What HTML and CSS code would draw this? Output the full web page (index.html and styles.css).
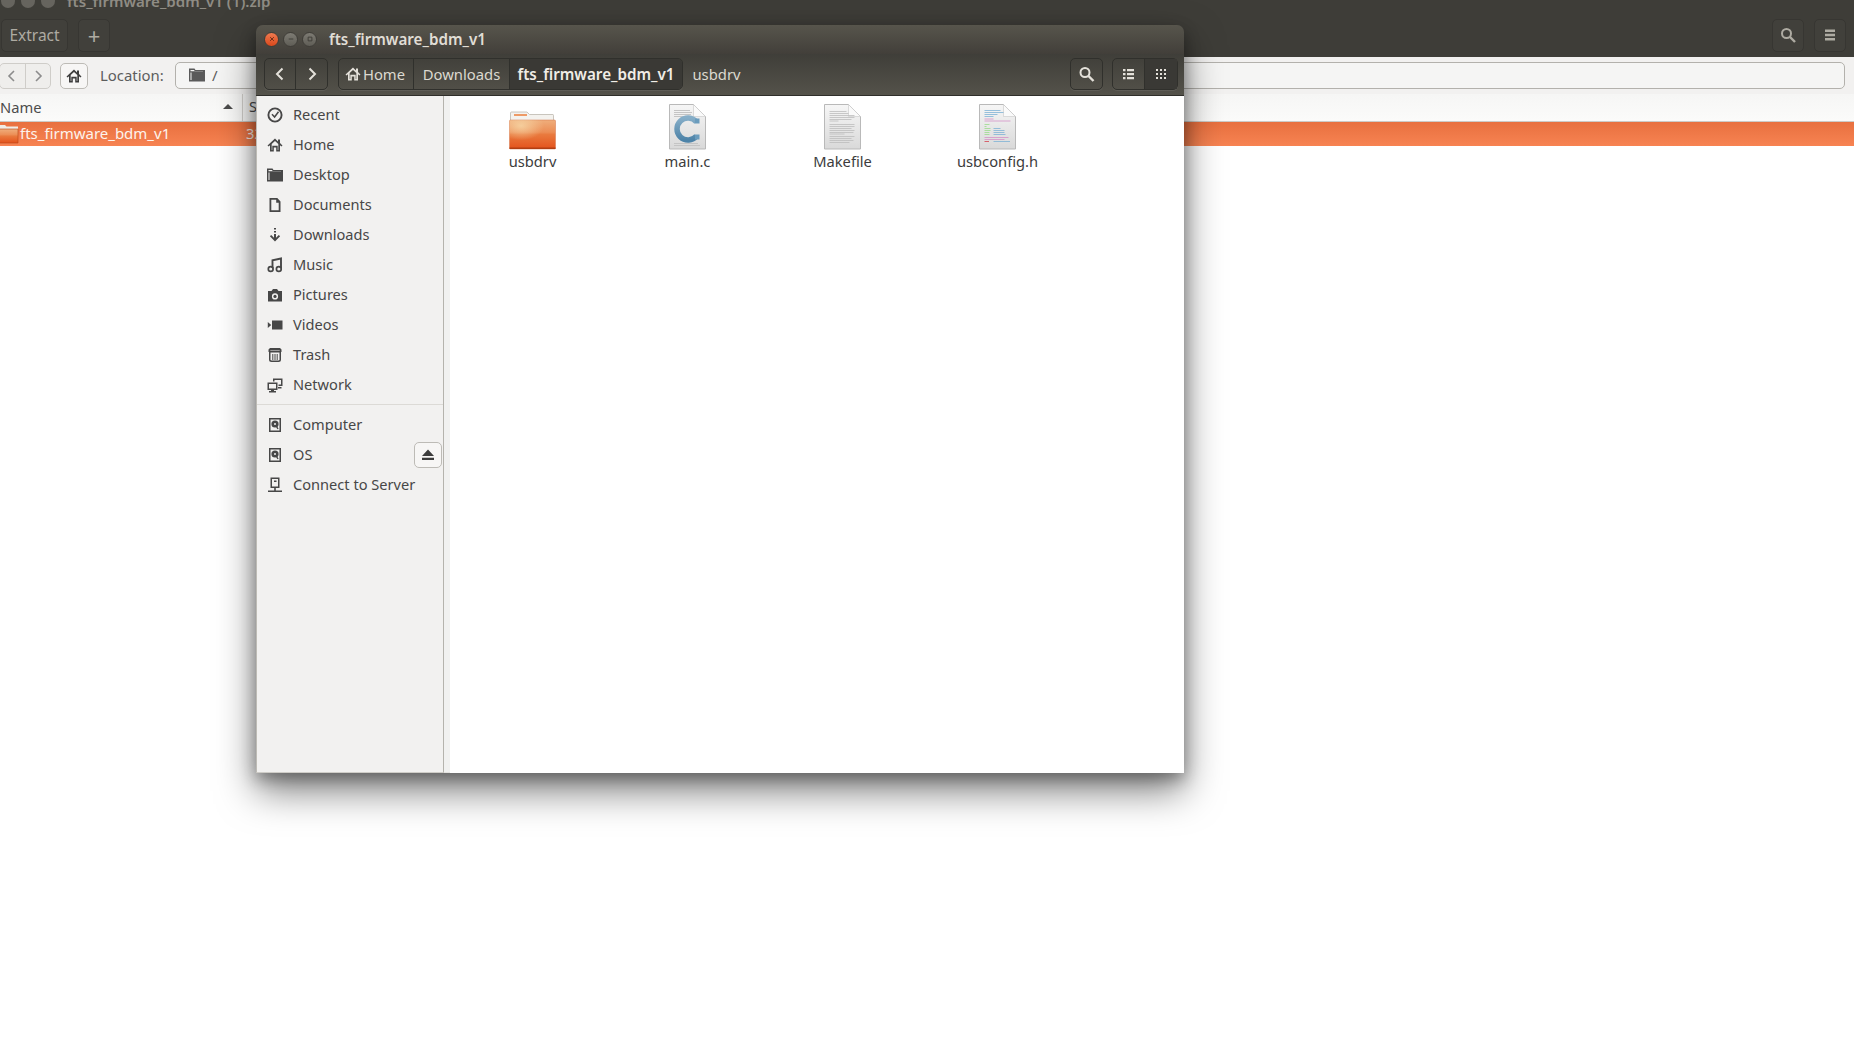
FILE: index.html
```html
<!DOCTYPE html>
<html lang="en">
<head>
<meta charset="utf-8">
<title>fts_firmware_bdm_v1</title>
<link rel="stylesheet" href="styles.css">
</head>
<body>
<svg class="defs" width="0" height="0" aria-hidden="true">
  <defs>
    <linearGradient id="page" x1="0" y1="0" x2="0" y2="1"><stop offset="0" stop-color="#f6f6f6"/><stop offset="1" stop-color="#d9d9d9"/></linearGradient>
    <linearGradient id="ring" x1="0" y1="0" x2="0" y2="1"><stop offset="0" stop-color="#86aec8"/><stop offset="1" stop-color="#4d83a8"/></linearGradient>
    <linearGradient id="fold" x1="0" y1="0" x2="0" y2="1"><stop offset="0" stop-color="#efae7c"/><stop offset=".42" stop-color="#ec8d55"/><stop offset=".5" stop-color="#e97a3e"/><stop offset="1" stop-color="#e4521c"/></linearGradient>
    <radialGradient id="glow" cx=".25" cy=".2" r=".5"><stop offset="0" stop-color="#f7d9a8" stop-opacity=".8"/><stop offset="1" stop-color="#f7d9a8" stop-opacity="0"/></radialGradient>
    <symbol id="i-home" viewBox="0 0 16 16"><path d="M8 1.500 .5 8.400l1.100 1.100L3 8.200V14.500h3.800V10.500h2.400v4H13V8.200l1.400 1.300 1.100-1.100-2.500-2.300V2.500h-2v1.900Z M4.700 7 8 3.900 11.300 7v5.900h-.6V8.800H5.300v4.100h-.6Z" fill-rule="evenodd"/></symbol>
    <symbol id="i-folder" viewBox="0 0 16 16"><path d="M0 1.500h5.500l1 1.500H16v11.500H0Z M1.500 3v1.200h12.500V4.400H6L5 3Z M1.500 5.500v7.500h1V5.500Z" fill-rule="evenodd"/></symbol>
    <symbol id="i-disk" viewBox="0 0 16 16"><path d="M2 1h12v14H2Z M3.500 2.500v11h9v-11Z" fill-rule="evenodd"/><circle cx="8" cy="7" r="3.600"/><path d="m8 7 3 5" stroke="currentColor" stroke-width="1.400"/><circle cx="8" cy="7" r="1" fill="#f2f1f0"/></symbol>
  </defs>
</svg>

<div class="desktop">
  <div class="back">
    <header class="back-head">
      <div class="back-title">
        <span class="dim-dot"></span><span class="dim-dot"></span><span class="dim-dot"></span>
        <span class="back-name">fts_firmware_bdm_v1 (1).zip</span>
      </div>
      <div class="back-bar">
        <button class="dim-btn wide">Extract</button>
        <button class="dim-btn plus">+</button>
        <span class="grow"></span>
        <button class="dim-btn"><svg class="ic16" viewBox="0 0 16 16"><circle cx="6.500" cy="6.500" r="4.500" fill="none" stroke="#aeaba2" stroke-width="2"/><path d="m10 10 5 5" stroke="#aeaba2" stroke-width="2.400"/></svg></button>
        <button class="dim-btn"><svg class="ic16" viewBox="0 0 16 16"><path d="M3 2.500h10v2.400H3Zm0 4.300h10v2.400H3Zm0 4.300h10v2.400H3Z" fill="#aeaba2"/></svg></button>
      </div>
    </header>
    <div class="back-tools">
      <div class="nav-light">
        <span class="nl"><svg class="ic12" viewBox="0 0 12 12"><path d="M8 1 3 6l5 5" fill="none" stroke="#8c8c8c" stroke-width="1.600"/></svg></span>
        <span class="nl last"><svg class="ic12" viewBox="0 0 12 12"><path d="m4 1 5 5-5 5" fill="none" stroke="#8c8c8c" stroke-width="1.600"/></svg></span>
      </div>
      <span class="home-light"><svg class="ic16 dark"><use href="#i-home"/></svg></span>
      <span class="loc-label">Location:</span>
      <div class="loc-entry"><svg class="ic16 grey"><use href="#i-folder"/></svg><span>/</span></div>
    </div>
    <div class="cols">
      <div class="col-name"><span>Name</span><span class="sort"></span></div>
      <div class="col-size">Size</div>
    </div>
    <div class="row">
      <svg class="row-folder" viewBox="0 0 20 20"><path d="M-1 1h6l1.500 1.500H18V6H-1Z" fill="#f1ede6"/><path d="M-2 5h20v14H-2Z" fill="url(#fold)" stroke="#b6461a" stroke-width=".6"/></svg>
      <span class="row-name">fts_firmware_bdm_v1</span>
      <span class="row-size">32</span>
    </div>
  </div>

  <section class="win">
    <div class="win-title">
      <span class="wb close"><svg viewBox="0 0 8 8"><path d="m1.500 1.500 5 5m0-5-5 5" stroke="#4a2011" stroke-width="1"/></svg></span>
      <span class="wb"><svg viewBox="0 0 8 8"><path d="M1 4h6" stroke="#3d3c37" stroke-width="1.200"/></svg></span>
      <span class="wb"><svg viewBox="0 0 8 8"><path d="M1.500 1.500h5v5h-5Z" fill="none" stroke="#3d3c37" stroke-width="1.200"/></svg></span>
      <span class="win-name">fts_firmware_bdm_v1</span>
    </div>
    <div class="win-tools">
      <div class="group nav">
        <span class="seg"><svg class="ic16" viewBox="0 0 16 16"><path d="M10.500 2.500 5 8l5.500 5.500" fill="none" stroke="#e4e1da" stroke-width="2"/></svg></span>
        <span class="seg"><svg class="ic16" viewBox="0 0 16 16"><path d="M5.500 2.500 11 8l-5.500 5.500" fill="none" stroke="#e4e1da" stroke-width="2"/></svg></span>
      </div>
      <div class="path">
        <div class="group crumbs">
          <span class="seg s-home"><svg class="ic16 light"><use href="#i-home"/></svg>Home</span>
          <span class="seg s-down">Downloads</span>
          <span class="seg s-fts">fts_firmware_bdm_v1</span>
        </div>
        <span class="s-usb">usbdrv</span>
      </div>
      <span class="grow"></span>
      <div class="group search">
        <span class="seg"><svg class="ic16" viewBox="0 0 16 16"><circle cx="6" cy="6.500" r="4.500" fill="none" stroke="#e4e1da" stroke-width="2"/><path d="m9.500 10 5 5" stroke="#e4e1da" stroke-width="2.400"/></svg></span>
      </div>
      <div class="group views">
        <span class="seg"><svg class="ic16" viewBox="0 0 16 16"><path d="M2 3h2.500v2.200H2Zm4 0h7v2.200H6ZM2 7h2.500v2.200H2Zm4 0h7v2.200H6ZM2 11h2.500v2.200H2Zm4 0h7v2.200H6Z" fill="#e4e1da"/></svg></span>
        <span class="seg on"><svg class="ic16" viewBox="0 0 16 16"><path d="M3 3h2v2H3Zm4 0h2v2H7Zm4 0h2v2h-2ZM3 7h2v2H3Zm4 0h2v2H7Zm4 0h2v2h-2ZM3 11h2v2H3Zm4 0h2v2H7Zm4 0h2v2h-2Z" fill="#e4e1da"/></svg></span>
      </div>
    </div>
    <div class="win-body">
      <nav class="side">
        <ul class="places">
          <li><svg class="ic16" viewBox="0 0 16 16"><circle cx="8" cy="8" r="6.600" fill="none" stroke="currentColor" stroke-width="1.900"/><path d="M5 7.300 7.600 10 11.500 4.800" fill="none" stroke="currentColor" stroke-width="1.500"/></svg>Recent</li>
          <li><svg class="ic16"><use href="#i-home"/></svg>Home</li>
          <li><svg class="ic16"><use href="#i-folder"/></svg>Desktop</li>
          <li><svg class="ic16" viewBox="0 0 16 16"><path d="M2.500 1h7.800l3.200 3.500V15h-11Zm1.800 1.700v10.600h7.400V5.800H9.200V2.700Z" fill-rule="evenodd"/></svg>Documents</li>
          <li><svg class="ic16" viewBox="0 0 16 16"><path d="M7 1h2v1.500H7Zm0 3h2v1.500H7Zm0 3h2v3.800l2.800-2.800 1.300 1.300L8 14.400 2.900 9.300 4.200 8 7 10.800Z"/></svg>Downloads</li>
          <li><svg class="ic16" viewBox="0 0 16 16"><path d="M5.500 11V3.200L14 1.500V11" fill="none" stroke="currentColor" stroke-width="1.900"/><circle cx="3.700" cy="12" r="2.400" fill="none" stroke="currentColor" stroke-width="1.700"/><circle cx="11.800" cy="12" r="2.400" fill="none" stroke="currentColor" stroke-width="1.700"/></svg>Music</li>
          <li><svg class="ic16" viewBox="0 0 16 16"><path d="M1 4h3.500L6 2h4l1.500 2H15v10.500H1Zm7 2.300a3.100 3.100 0 1 0 0 6.200 3.100 3.100 0 0 0 0-6.200Z" fill-rule="evenodd"/><circle cx="8" cy="9.400" r="1.600"/></svg>Pictures</li>
          <li><svg class="ic16" viewBox="0 0 16 16"><path d="M5 3.500h10.500v9H5ZM.8 5l3.400 3-3.400 3Z"/></svg>Videos</li>
          <li><svg class="ic16" viewBox="0 0 16 16"><path d="M3 1h10l1.500 1.500V5H14v7.500q0 2.500-2.500 2.500h-7Q2 15 2 12.500V5h-.5V2.500Zm.3 2.500h9.400V4H3.300Zm.2 2v7.500l1 .6h7l1-.6V5.500Z" fill-rule="evenodd"/><path d="M5.800 7v6M8 7v6M10.200 7v6" stroke="currentColor" stroke-width="1"/></svg>Trash</li>
          <li><svg class="ic16" viewBox="0 0 16 16"><path d="M0.500 5.500h10v7.500h-10Zm1.500 1.500v4.500h7V7Z M2 14h7v1.500H2Z M4 13h3v1H4Z M6 1.500h9.500V9h-4V7.500h2.500V3H7.500v1.500H6Z M11 10h3.500v1.500H11Z" fill-rule="evenodd"/></svg>Network</li>
        </ul>
        <hr class="rule">
        <ul class="places">
          <li><svg class="ic16"><use href="#i-disk"/></svg>Computer</li>
          <li class="with-eject"><svg class="ic16"><use href="#i-disk"/></svg>OS<button class="eject"><svg class="ic16" viewBox="0 0 16 16"><path d="M8 2.500 14 9H2ZM2 10.800h12v2.200H2Z" fill="#3c3c3c"/></svg></button></li>
          <li><svg class="ic16" viewBox="0 0 16 16"><path d="M3.500 .5h9V11h-9Zm1.500 1.500v7.500h6V2Z M7 3.500h2.500v1.500H7Z M7.200 11h1.600v2.500H7.200Z M1 13.500h14V15H1Z" fill-rule="evenodd"/></svg>Connect to Server</li>
        </ul>
      </nav>
      <div class="strip"></div>
      <main class="files">
        <figure class="file">
          <svg class="big" viewBox="0 0 48 48">
            <path d="M1.500 18V9q0-1 1-1h15.500l2.500 2.500H44q.5 0 .5 1V18Z" fill="#f4f2ee" stroke="#bdb8ae" stroke-width=".8"/>
            <rect x="5" y="10" width="13" height="2" fill="#ee9a66"/>
            <path d="M1.500 16h44q1 0 1 1V44q0 1-1 1h-44q-1 0-1-1V17q0-1 1-1Z" fill="url(#fold)" stroke="#d5754a" stroke-width=".5"/>
            <path d="M.5 16h46v29H.5Z" fill="url(#glow)"/>
            <path d="M.5 43.500h46V45H.5Z" fill="#b13e13"/>
          </svg>
          <figcaption>usbdrv</figcaption>
        </figure>
        <figure class="file">
          <svg class="big" viewBox="0 0 48 48">
            <path d="M5.500 .5h24l12 12v32.500h-36Z" fill="url(#page)" stroke="#b9b9b9"/>
            <path d="M29.500 .5v12h12Z" fill="#fafafa" stroke="#c8c8c8" stroke-width=".6"/>
            <path d="M10 6.500h16M10 8.500h18M10 10.500h17M10 12.500h12M10 39.500h24M10 41.500h26" stroke="#c4c4c4" stroke-width="1"/>
            <path d="M32.500 18A11 11 0 1 0 32.500 32" fill="none" stroke="url(#ring)" stroke-width="5.500"/>
            <path d="M31 14.500h4.500v5H31ZM31 30.500h4.500v5H31Z" fill="#6a9cbd"/>
          </svg>
          <figcaption>main.c</figcaption>
        </figure>
        <figure class="file">
          <svg class="big" viewBox="0 0 48 48">
            <path d="M5.500 .5h24l12 12v32.500h-36Z" fill="url(#page)" stroke="#b9b9b9"/>
            <path d="M29.500 .5v12h12Z" fill="#fafafa" stroke="#c8c8c8" stroke-width=".6"/>
            <path d="M10.500 7.500h17M10.500 9.500h19M10.500 11.500h25M10.500 13.500h25M10.500 15.500h22M10.500 17h9M10.500 20.500h25M10.500 22.500h25M10.500 24.500h22M10.500 26.500h25M10.500 28.500h24M10.500 30h15M10.500 32.500h25M10.500 34.500h22M10.500 36.500h24M10.500 38.500h20" stroke="#bcbcbc" stroke-width=".8"/>
          </svg>
          <figcaption>Makefile</figcaption>
        </figure>
        <figure class="file">
          <svg class="big" viewBox="0 0 48 48">
            <path d="M5.500 .5h24l12 12v32.500h-36Z" fill="url(#page)" stroke="#b9b9b9"/>
            <path d="M29.500 .5v12h12Z" fill="#fafafa" stroke="#c8c8c8" stroke-width=".6"/>
            <path d="M10.500 6.500h16M10.500 8.500h19M10.500 10.500h13M10.500 12.500h9M19.500 24.500h7M19.500 26.500h11M19.500 28.500h11M19.500 30.500h12M19.500 37.500h16.500" stroke="#7fb2d5" stroke-width=".8"/>
            <path d="M10.500 15h9M10.500 17h26M10.500 33.500h24M10.500 35.500h20" stroke="#d492c8" stroke-width=".8"/>
            <path d="M10.500 20.500h5M10.500 22.500h2M10.500 24.500h6M10.500 26.500h6M10.500 28.500h5M10.500 30.500h5" stroke="#9bdb8c" stroke-width=".8"/>
            <path d="M10.500 37.500h4.500" stroke="#d4434f" stroke-width=".8"/>
          </svg>
          <figcaption>usbconfig.h</figcaption>
        </figure>
      </main>
    </div>
  </section>
</div>
</body>
</html>
```
FILE: styles.css
```css
* { box-sizing: border-box; }
html, body { margin: 0; height: 100%; }
body { font-family: "Noto Sans", "Open Sans", sans-serif; font-size: 14px; background: #fff; overflow: hidden; }
.defs { position: absolute; }
ul { list-style: none; margin: 0; padding: 0; }
button { font: inherit; padding: 0; }
svg { display: block; flex: none; }
.grow { flex: 1; }
.ic16 { width: 16px; height: 16px; fill: currentColor; }
.ic12 { width: 12px; height: 12px; }
.dark { color: #3d3d3d; }
.grey { color: #5a5a5a; }
.light { color: #e4e1da; }

.desktop { position: relative; width: 1854px; height: 1042px; overflow: hidden; background: #fff; }

/* window behind */
.back-head { height: 57px; background: #3e3d38; color: #aeaba2; overflow: hidden; }
.back-title { display: flex; align-items: center; height: 20px; margin-top: -9px; margin-bottom: 8px; padding-left: 1px; }
.dim-dot { width: 14px; height: 14px; border-radius: 50%; background: #66645e; margin-right: 6px; }
.back-name { margin-left: 6px; color: #8f8c84; font-weight: 600; font-size: 15.100px; }
.back-bar { display: flex; gap: 10px; padding: 0 8px 0 1px; height: 33px; }
.dim-btn { width: 32px; height: 33px; display: flex; align-items: center; justify-content: center; padding-bottom: 1px; background: #41403b; border: 1px solid #373632; border-radius: 5px; color: #aeaba2; }
.dim-btn.wide { width: 67px; font-size: 15.500px; }
.dim-btn.plus { font-size: 22px; }

.back-tools { display: flex; align-items: center; height: 37px; background: #f2f1f0; padding-right: 9px; color: #5d5d5d; }
.nav-light { display: flex; width: 52px; height: 26px; margin-left: -1px; border: 1px solid #cfcdc9; border-radius: 5px; background: #efeeec; }
.nl { flex: 1; display: flex; align-items: center; justify-content: center; border-right: 1px solid #cfcdc9; }
.nl.last { border-right: 0; }
.home-light { width: 28px; height: 26px; margin-left: 9px; display: flex; align-items: center; justify-content: center; border: 1px solid #bdbbb6; border-radius: 5px; background: #f7f6f5; }
.loc-label { width: 87px; padding: 0 0 2px 12px; font-size: 14.900px; white-space: nowrap; }
.loc-entry { flex: 1; height: 27px; display: flex; align-items: center; gap: 7px; padding: 0 0 1px 13px; background: #f5f5f4; border: 1px solid #b3b1ac; border-radius: 5px; font-size: 15px; }

.cols { display: flex; height: 28px; background: linear-gradient(#f6f6f5, #fbfbfa); border-bottom: 1px solid #cdcbc7; color: #4c4c4c; }
.col-name { width: 243px; display: flex; align-items: center; justify-content: space-between; padding: 0 9px 2px 0; border-right: 1px solid #d4d2ce; font-size: 14.700px; }
.sort { width: 0; height: 0; border-left: 5px solid transparent; border-right: 5px solid transparent; border-bottom: 5px solid #4c4c4c; }
.col-size { padding-left: 6px; line-height: 25px; font-size: 14.700px; }
.row { display: flex; align-items: center; height: 24px; padding-bottom: 2px; background: linear-gradient(#e8703f, #f78352); color: #fdf3ec; font-size: 15px; }
.row-folder { width: 20px; height: 20px; margin: 2px 0 0 0; }
.row-name { width: 226px; }
.row-size { font-size: 14.700px; }

/* foreground window */
.win { position: absolute; left: 256px; top: 25px; width: 928px; height: 748px; display: flex; flex-direction: column; border-radius: 7px 7px 0 0; box-shadow: 0 18px 38px rgba(0,0,0,.5), 0 6px 16px rgba(0,0,0,.32); }
.win-title { display: flex; align-items: center; height: 29px; padding: 0 0 1px 8px; background: linear-gradient(#57554c, #423f3a); border-radius: 7px 7px 0 0; }
.wb { width: 15px; height: 15px; border-radius: 50%; margin-right: 4px; padding: 3.500px; background: linear-gradient(#7d7b73, #5f5d56); border: 1px solid #3f3d38; }
.wb.close { background: linear-gradient(#ee7a50, #d9481b); }
.win-name { margin-left: 8px; color: #e0ddd5; font-weight: 600; font-size: 15.200px; }
.win-tools { display: flex; align-items: center; height: 42px; padding: 0 6px 1px 8px; background: linear-gradient(#3f3e39, #54524a); border-bottom: 1px solid #2f2e2a; color: #dcd9d0; font-size: 14.800px; }
.group { display: flex; height: 32px; border: 1px solid #30302c; border-radius: 5px; box-shadow: 0 1px 0 rgba(255,255,255,.08); }
.seg { display: flex; align-items: center; justify-content: center; height: 100%; border-right: 1px solid #30302c; }
.seg:last-child { border-right: 0; }
.nav { width: 64px; }
.nav .seg { width: 50%; }
.path { display: flex; align-items: center; margin-left: 10px; }
.s-home { width: 75px; gap: 2px; padding-right: 2px; }
.s-down { width: 96px; }
.s-fts { width: 172px; background: #3a3935; color: #f0ede6; font-weight: 600; font-size: 15.200px; border-radius: 0 4px 4px 0; }
.s-usb { width: 67px; text-align: center; }
.search { width: 33px; }
.search .seg { width: 100%; }
.views { width: 66px; margin-left: 9px; }
.views .seg { width: 50%; }
.views .on { background: #3a3935; }

.win-body { flex: 1; display: flex; min-height: 0; background: #fff; }
.side { width: 188px; background: #f2f1f0; border-left: 1px solid #bdbbb5; border-right: 1px solid #b5b3ad; border-bottom: 1px solid #cfcdc8; padding-top: 4px; color: #474747; font-size: 14.600px; }
.places li { display: flex; align-items: center; gap: 10px; height: 30px; padding: 0 0 2px 10px; }
.places li > svg { margin-top: 2px; }
.with-eject { position: relative; }
.eject { position: absolute; right: 1px; top: 2px; width: 28px; height: 26px; display: flex; align-items: center; justify-content: center; background: #f7f6f5; border: 1px solid #bdbbb6; border-radius: 5px; }
.rule { height: 1px; border: 0; margin: 4px 0 5px; background: #dcdad6; }
.strip { width: 6px; background: #f1f1f0; border-bottom: 1px solid #e3e2df; }
.files { flex: 1; display: grid; grid-template-columns: repeat(4, 155px); grid-auto-rows: min-content; padding: 8px 0 0 5px; }
.file { margin: 0; display: flex; flex-direction: column; align-items: center; color: #3c3c3c; }
.big { width: 48px; height: 48px; }
.file figcaption { height: 18px; line-height: 18px; font-size: 14.700px; }
```
